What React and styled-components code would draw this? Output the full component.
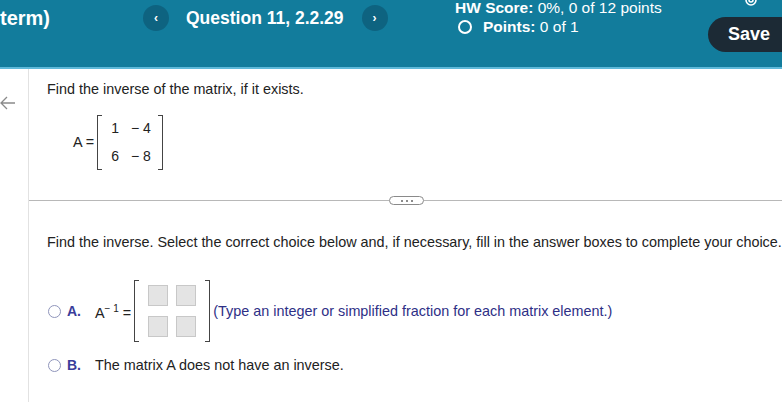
import React from 'react'
import styled, { createGlobalStyle } from 'styled-components'

const Global = createGlobalStyle`
  html, body {
    margin: 0;
    padding: 0;
    background: #fff;
    overflow: hidden;
  }
  body {
    font-family: "Liberation Sans", Arial, sans-serif;
  }
`

const Header = styled.div`
  height: 67px;
  background: #127c9c;
  border-bottom: 2px solid #5fb9d9;
  display: flex;
  align-items: flex-start;
  color: #fff;
  position: relative;
`

const Title = styled.div`
  width: 143px;
  padding-top: 7px;
  font-size: 20px;
  font-weight: 700;
`

const Nav = styled.div`
  display: flex;
  align-items: center;
  gap: 17px;
  padding-top: 5px;
  width: 312px;
`

const Circle = styled.div`
  width: 26px;
  height: 26px;
  border-radius: 50%;
  background: #0e6380;
  display: flex;
  align-items: center;
  justify-content: center;
  font-size: 12px;
  font-weight: 700;
`

const QTitle = styled.div`
  font-size: 17.5px;
  font-weight: 700;
  margin-right: 1px;
`

const Score = styled.div`
  display: flex;
  flex-direction: column;
  font-size: 15.5px;
  line-height: 19px;
  margin-top: -2px;
  b { font-weight: 700; }
`

const PointsRow = styled.div`
  display: flex;
  align-items: center;
  gap: 11px;
  padding-left: 3px;
`

const Ring = styled.span`
  width: 10px;
  height: 10px;
  border: 2px solid #fff;
  border-radius: 50%;
`

const SaveButton = styled.div`
  position: absolute;
  left: 708px;
  top: 17px;
  width: 90px;
  height: 35px;
  border-radius: 18px;
  background: #1c2a35;
  display: flex;
  align-items: center;
  padding-left: 20px;
  box-sizing: border-box;
  font-size: 18px;
  font-weight: 700;
`

const Gear = styled.svg`
  position: absolute;
  left: 743px;
  top: -8px;
`

const Body = styled.div`
  display: flex;
  height: 333px;
`

const Side = styled.div`
  width: 28px;
  border-right: 1px solid #e2e2e2;
  padding-top: 27px;
`

const Main = styled.div`
  flex: 1;
  padding-left: 18px;
  color: #222;
  font-size: 14.4px;
  line-height: 17px;
`

const Prompt = styled.div`
  margin-top: 12px;
  white-space: nowrap;
`

const MatrixRow = styled.div`
  display: flex;
  align-items: center;
  gap: 3px;
  margin-left: ${p => p.indent || 0}px;
  margin-top: ${p => p.top || 0}px;
`

const Brk = styled.div`
  display: flex;
  align-items: stretch;
`

const Edge = styled.div`
  width: 4px;
  border: 1.5px solid #444;
  ${p => (p.side === 'left' ? 'border-right: none;' : 'border-left: none;')}
`

const Cells = styled.div`
  display: grid;
  grid-template-columns: repeat(2, auto);
  column-gap: ${p => p.gap}px;
  row-gap: ${p => p.rowGap}px;
  padding: ${p => p.pad};
  justify-items: end;
`

const Cell = styled.span`
  font-size: 14px;
`

const Divider = styled.div`
  display: flex;
  align-items: center;
  margin: 26px 0 0 -18px;
`

const Line = styled.div`
  flex: ${p => p.grow};
  height: 1px;
  background: #b8b8b8;
`

const Handle = styled.div`
  width: 33px;
  height: 7px;
  border: 1.5px solid #8a8a8a;
  border-radius: 6px;
  display: flex;
  align-items: center;
  justify-content: center;
  gap: 3px;
  span {
    width: 2px;
    height: 2px;
    background: #666;
    border-radius: 1px;
  }
`

const Instruction = styled.div`
  margin-top: 29px;
  white-space: nowrap;
`

const Option = styled.div`
  display: flex;
  align-items: center;
  margin-top: ${p => p.top}px;
  margin-left: 1px;
`

const Radio = styled.span`
  width: 11px;
  height: 11px;
  border: 1.5px solid #8f95bb;
  border-radius: 50%;
  flex-shrink: 0;
`

const Letter = styled.span`
  color: #3a3d9a;
  font-weight: 700;
  font-size: 14px;
  margin-left: 6px;
  width: 28px;
`

const Sup = styled.sup`
  font-size: 10px;
  vertical-align: 6px;
`

const Box = styled.div`
  width: 20px;
  height: 21px;
  background: #e4e4e4;
  border: 1px solid #c8c8c8;
  box-sizing: border-box;
`

const Hint = styled.span`
  color: #2e2f86;
  margin-left: 3px;
`

export default function App() {
  return (
    <>
      <Global />
      <Header>
        <Title>term)</Title>
        <Nav>
          <Circle>&lsaquo;</Circle>
          <QTitle>Question 11, 2.2.29</QTitle>
          <Circle>&rsaquo;</Circle>
        </Nav>
        <Score>
          <div><b>HW Score:</b> 0%, 0 of 12 points</div>
          <PointsRow><Ring /><span><b>Points:</b> 0 of 1</span></PointsRow>
        </Score>
        <Gear width="16" height="16" viewBox="0 0 16 16" fill="none" stroke="#fff" strokeWidth="1.6">
          <circle cx="8" cy="8" r="5" />
          <circle cx="8" cy="8" r="2" />
        </Gear>
        <SaveButton>Save</SaveButton>
      </Header>
      <Body>
        <Side>
          <svg width="16" height="14" viewBox="0 0 16 14" fill="none" stroke="#8a8a8a" strokeWidth="1.3">
            <path d="M15 7H1M7 1L1 7l6 6" />
          </svg>
        </Side>
        <Main>
          <Prompt>Find the inverse of the matrix, if it exists.</Prompt>
          <MatrixRow indent={26} top={17}>
            <span>A =</span>
            <Brk>
              <Edge side="left" />
              <Cells gap={12} rowGap={11} pad="5px 7px 5px 9px">
                <Cell>1</Cell><Cell>&minus; 4</Cell>
                <Cell>6</Cell><Cell>&minus; 8</Cell>
              </Cells>
              <Edge side="right" />
            </Brk>
          </MatrixRow>
          <Divider>
            <Line grow={359} />
            <Handle><span /><span /><span /></Handle>
            <Line grow={357} />
          </Divider>
          <Instruction>
            Find the inverse. Select the correct choice below and, if necessary, fill in the answer boxes to complete your choice.
          </Instruction>
          <Option top={29}>
            <Radio />
            <Letter>A.</Letter>
            <MatrixRow>
              <span>A<Sup>&minus; 1</Sup> =</span>
              <Brk>
                <Edge side="left" />
                <Cells gap={8} rowGap={10} pad="5px 9px 5px 9px">
                  <Box /><Box />
                  <Box /><Box />
                </Cells>
                <Edge side="right" />
              </Brk>
            </MatrixRow>
            <Hint>(Type an integer or simplified fraction for each matrix element.)</Hint>
          </Option>
          <Option top={15}>
            <Radio />
            <Letter>B.</Letter>
            <span>The matrix A does not have an inverse.</span>
          </Option>
        </Main>
      </Body>
    </>
  )
}
